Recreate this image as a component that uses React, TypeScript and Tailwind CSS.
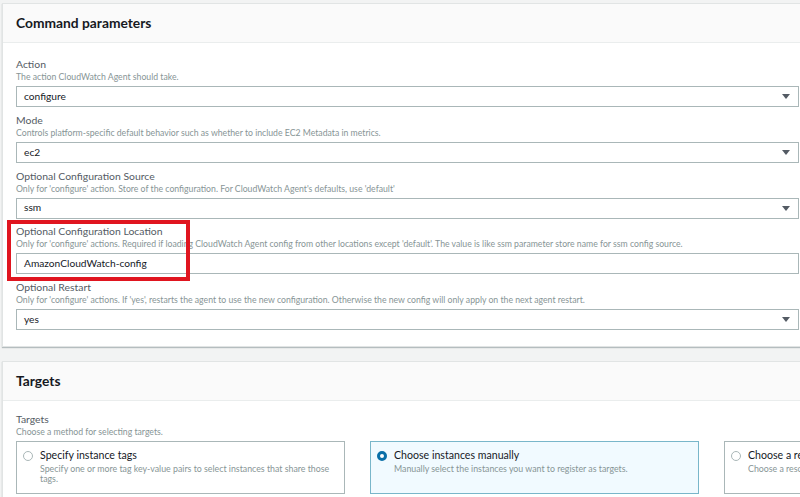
import React from "react";

function Arrow() {
  return (
    <svg width="8" height="5" viewBox="0 0 8 5" className="shrink-0">
      <path d="M0 0 H8 L4 5 Z" fill="#545b64" />
    </svg>
  );
}

function Field({
  label,
  desc,
  value,
  select = true,
  children,
}: {
  label: string;
  desc: string;
  value: string;
  select?: boolean;
  children?: React.ReactNode;
}) {
  return (
    <div className="relative">
      {children}
      <div className="text-[10.4px] leading-[13px] text-[#545b64] whitespace-nowrap">{label}</div>
      <div className="text-[8.7px] leading-[11px] text-[#879596] whitespace-nowrap">{desc}</div>
      <div className="mt-[4px] h-[21px] border border-[#aab7b8] bg-white flex items-center justify-between pl-[7px] pr-[8px] text-[10.2px] text-[#16191f]">
        <span>{value}</span>
        {select && <Arrow />}
      </div>
    </div>
  );
}

function Tile({
  title,
  desc,
  selected = false,
}: {
  title: string;
  desc: string;
  selected?: boolean;
}) {
  return (
    <div
      className={
        selected
          ? "w-[329px] h-[53px] shrink-0 border border-[#79b6ca] bg-[#f1faff] pl-[6px] pt-[7px] pr-[10px] flex items-start gap-[7px]"
          : "w-[329px] h-[53px] shrink-0 border border-[#aab7b8] bg-white pl-[6px] pt-[7px] pr-[10px] flex items-start gap-[7px]"
      }
    >
      {selected ? (
        <div className="mt-[1.5px] w-[10px] h-[10px] rounded-full border-[3px] border-[#0a6fa8] bg-white shrink-0" />
      ) : (
        <div className="mt-[1.5px] w-[10px] h-[10px] rounded-full border border-[#aab7b8] bg-white shrink-0" />
      )}
      <div className="min-w-0">
        <div className="text-[10.6px] leading-[13px] text-[#16191f] whitespace-nowrap">{title}</div>
        <div className="text-[8.8px] leading-[10.5px] text-[#879596] mt-[1.5px]">{desc}</div>
      </div>
    </div>
  );
}

export default function App() {
  return (
    <div className="w-[800px] h-[497px] overflow-hidden bg-[#f2f3f3] pt-[3px] pl-[2px] font-['Lato','Liberation_Sans',sans-serif]">
      <div className="w-[811px] bg-white border border-[#e1e4e4] shadow-[0_1px_1px_rgba(0,28,36,0.25)]">
        <div className="h-[39px] bg-[#fafafa] border-b border-[#eaeded] px-[13px] flex items-center">
          <h2 className="text-[13.8px] font-bold text-[#16191f]">Command parameters</h2>
        </div>
        <div className="pt-[15px] pb-[16px] px-[13px] flex flex-col gap-[6.75px]">
          <Field label="Action" desc="The action CloudWatch Agent should take." value="configure" />
          <Field
            label="Mode"
            desc="Controls platform-specific default behavior such as whether to include EC2 Metadata in metrics."
            value="ec2"
          />
          <Field
            label="Optional Configuration Source"
            desc="Only for 'configure' action. Store of the configuration. For CloudWatch Agent's defaults, use 'default'"
            value="ssm"
          />
          <Field
            label="Optional Configuration Location"
            desc="Only for 'configure' actions. Required if loading CloudWatch Agent config from other locations except 'default'. The value is like ssm parameter store name for ssm config source."
            value="AmazonCloudWatch-config"
            select={false}
          >
            <div className="absolute left-[-9px] top-[-5px] w-[183px] h-[61px] border-[4px] border-[#e0151f] z-10 pointer-events-none" />
          </Field>
          <Field
            label="Optional Restart"
            desc="Only for 'configure' actions. If 'yes', restarts the agent to use the new configuration. Otherwise the new config will only apply on the next agent restart."
            value="yes"
          />
        </div>
      </div>

      <div className="mt-[14px] w-[811px] bg-white border border-[#e1e4e4] shadow-[0_1px_1px_rgba(0,28,36,0.25)]">
        <div className="h-[39px] bg-[#fafafa] border-b border-[#eaeded] px-[13px] flex items-center">
          <h2 className="text-[13.8px] font-bold text-[#16191f]">Targets</h2>
        </div>
        <div className="pt-[12px] px-[13px] pb-[16px]">
          <div className="text-[10.4px] leading-[13px] text-[#545b64]">Targets</div>
          <div className="text-[8.7px] leading-[11px] text-[#879596]">Choose a method for selecting targets.</div>
          <div className="mt-[4px] flex gap-[25px]">
            <Tile
              title="Specify instance tags"
              desc="Specify one or more tag key-value pairs to select instances that share those tags."
            />
            <Tile
              title="Choose instances manually"
              desc="Manually select the instances you want to register as targets."
              selected
            />
            <Tile
              title="Choose a resource group"
              desc="Choose a resource group that includes the resources you want to target."
            />
          </div>
        </div>
      </div>
    </div>
  );
}
